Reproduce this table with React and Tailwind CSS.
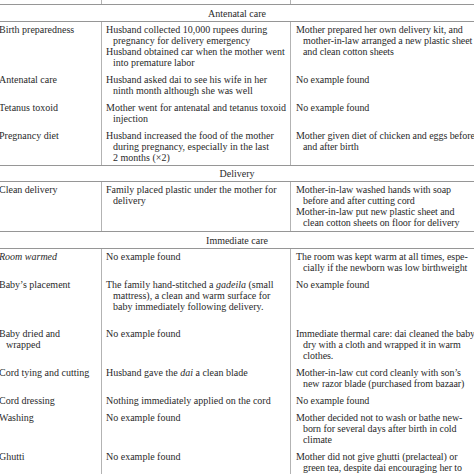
import React from "react";

const Lines = ({ paras, italic = false }) => (
  <div className={italic ? "italic" : ""}>
    {paras.map((p, i) => (
      <div key={i}>
        {p.map((l, j) => (
          <div key={j} className={"whitespace-nowrap " + (j > 0 ? "pl-[7px]" : "")}>
            {l}
          </div>
        ))}
      </div>
    ))}
  </div>
);

const Row = ({ a, b, c, aItalic, pb = "pb-[4px]" }) => (
  <div className="grid grid-cols-[101px_189px_200px]">
    <div className={"pt-[2px] -ml-[1px] " + pb}>
      <Lines paras={a} italic={aItalic} />
    </div>
    <div className={"border-l border-[#b3b3b3] pl-[4px] pt-[2px] " + pb}>
      <Lines paras={b} />
    </div>
    <div className={"border-l border-[#b3b3b3] pl-[5px] pt-[2px] tracking-[-0.07px] " + pb}>
      <Lines paras={c} />
    </div>
  </div>
);

const Header = ({ children, h = "h-[18px]" }) => (
  <div className={"border-y border-[#969696] flex items-center justify-center w-[474px] " + h}>
    {children}
  </div>
);

const NF = [["No example found"]];

export default function App() {
  return (
    <div
      className="w-[474px] h-[474px] overflow-hidden bg-white text-[#2a2a2a] text-[10px] leading-[11px]"
      style={{ fontFamily: '"Liberation Serif", "Times New Roman", serif' }}
    >
      <div className="w-[490px]">
        <div className="grid grid-cols-[101px_189px_200px] h-[4px]">
          <div />
          <div className="border-l border-[#b3b3b3]" />
          <div className="border-l border-[#b3b3b3]" />
        </div>
        <Header>Antenatal care</Header>
        <Row
          a={[["Birth preparedness"]]}
          b={[
            ["Husband collected 10,000 rupees during", "pregnancy for delivery emergency"],
            ["Husband obtained car when the mother went", "into premature labor"],
          ]}
          c={[
            [
              "Mother prepared her own delivery kit, and",
              "mother-in-law arranged a new plastic sheet",
              "and clean cotton sheets",
            ],
          ]}
        />
        <Row
          a={[["Antenatal care"]]}
          b={[["Husband asked dai to see his wife in her", "ninth month although she was well"]]}
          c={NF}
        />
        <Row
          a={[["Tetanus toxoid"]]}
          b={[["Mother went for antenatal and tetanus toxoid", "injection"]]}
          c={NF}
        />
        <Row
          a={[["Pregnancy diet"]]}
          b={[
            [
              "Husband increased the food of the mother",
              "during pregnancy, especially in the last",
              "2 months (×2)",
            ],
          ]}
          c={[["Mother given diet of chicken and eggs before", "and after birth"]]}
          pb="pb-[2px]"
        />
        <Header h="h-[17px]">Delivery</Header>
        <Row
          a={[["Clean delivery"]]}
          b={[["Family placed plastic under the mother for", "delivery"]]}
          c={[
            ["Mother-in-law washed hands with soap", "before and after cutting cord"],
            ["Mother-in-law put new plastic sheet and", "clean cotton sheets on floor for delivery"],
          ]}
          pb="pb-[3px]"
        />
        <Header>Immediate care</Header>
        <Row
          a={[["Room warmed"]]}
          aItalic
          b={NF}
          c={[
            [
              "The room was kept warm at all times, espe-",
              "cially if the newborn was low birthweight",
            ],
          ]}
        />
        <Row
          a={[["Baby’s placement"]]}
          b={[
            [
              <>
                The family hand-stitched a <i>gadeila</i> (small
              </>,
              "mattress), a clean and warm surface for",
              "baby immediately following delivery.",
            ],
          ]}
          c={NF}
          pb="pb-[14px]"
        />
        <Row
          a={[["Baby dried and", "wrapped"]]}
          b={NF}
          c={[
            [
              "Immediate thermal care: dai cleaned the baby",
              "dry with a cloth and wrapped it in warm",
              "clothes.",
            ],
          ]}
        />
        <Row
          a={[["Cord tying and cutting"]]}
          b={[
            [
              <>
                Husband gave the <i>dai</i> a clean blade
              </>,
            ],
          ]}
          c={[
            [
              "Mother-in-law cut cord cleanly with son’s",
              "new razor blade (purchased from bazaar)",
            ],
          ]}
        />
        <Row a={[["Cord dressing"]]} b={[["Nothing immediately applied on the cord"]]} c={NF} />
        <Row
          a={[["Washing"]]}
          b={NF}
          c={[
            [
              "Mother decided not to wash or bathe new-",
              "born for several days after birth in cold",
              "climate",
            ],
          ]}
        />
        <Row
          a={[["Ghutti"]]}
          b={NF}
          c={[
            [
              "Mother did not give ghutti (prelacteal) or",
              "green tea, despite dai encouraging her to",
            ],
          ]}
        />
      </div>
    </div>
  );
}
